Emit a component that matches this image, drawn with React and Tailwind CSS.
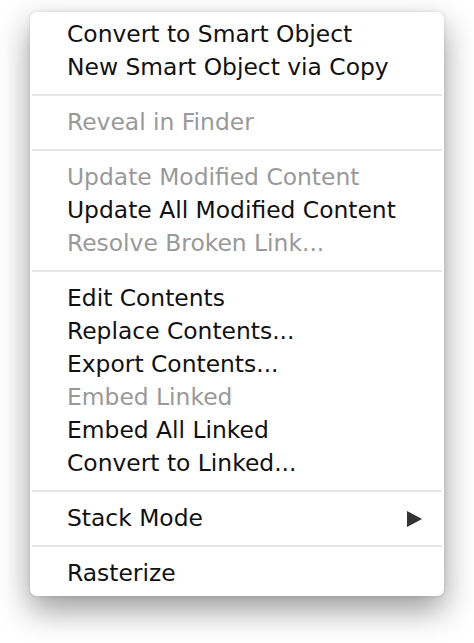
import React from 'react';

const groups = [
  [
    { label: 'Convert to Smart Object' },
    { label: 'New Smart Object via Copy' },
  ],
  [{ label: 'Reveal in Finder', disabled: true }],
  [
    { label: 'Update Modified Content', disabled: true },
    { label: 'Update All Modified Content' },
    { label: 'Resolve Broken Link...', disabled: true },
  ],
  [
    { label: 'Edit Contents' },
    { label: 'Replace Contents...' },
    { label: 'Export Contents...' },
    { label: 'Embed Linked', disabled: true },
    { label: 'Embed All Linked' },
    { label: 'Convert to Linked...' },
  ],
  [{ label: 'Stack Mode', submenu: true }],
  [{ label: 'Rasterize' }],
];

function Item({ label, disabled, submenu }) {
  return (
    <div
      className={`flex h-[33px] items-center justify-between pl-[37px] pr-[22px] ${
        disabled ? 'text-[#999999]' : 'text-[#111111]'
      }`}
    >
      <span>{label}</span>
      {submenu && (
        <svg width="15" height="16" viewBox="0 0 15 16" className="text-[#333333]">
          <path d="M0 0 L15 8 L0 16 Z" fill="currentColor" />
        </svg>
      )}
    </div>
  );
}

export default function App() {
  return (
    <div className="min-h-[643px] bg-white pl-[30px] pt-[12px]">
      <div
        className="w-[414px] rounded-[7px] bg-white pt-[6px] pb-[6px] text-[23.4px] leading-none shadow-[0_14px_32px_rgba(0,0,0,0.4),0_0_4px_rgba(0,0,0,0.12)]"
        style={{ fontFamily: '"DejaVu Sans", sans-serif' }}
      >
        {groups.map((g, i) => (
          <div key={i}>
            {i > 0 && <div className="mx-[2px] my-[10px] h-[2px] bg-[#e6e6e6]" />}
            {g.map((it) => (
              <Item key={it.label} {...it} />
            ))}
          </div>
        ))}
      </div>
    </div>
  );
}
